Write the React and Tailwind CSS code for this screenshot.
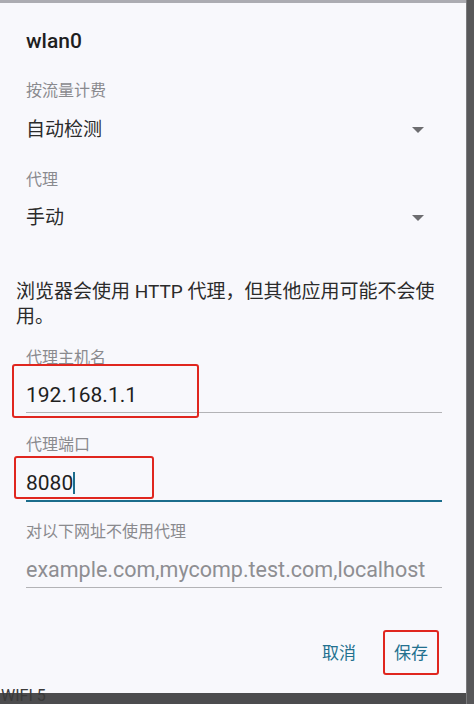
import React from "react";

const Label = ({ children, className = "" }) => (
  <div className={`text-[16px] leading-[22px] text-[#8a8a8e] ${className}`}>{children}</div>
);

const Select = ({ value, className = "" }) => (
  <div className={`flex items-center justify-between pr-[18px] ${className}`}>
    <span className="text-[19px] leading-[26px] text-[#2b2b2b]">{value}</span>
    <span className="w-0 h-0 border-l-[6px] border-r-[6px] border-t-[6px] border-l-transparent border-r-transparent border-t-[#6d6d70]" />
  </div>
);

const Field = ({ children, focused, className = "" }) => (
  <div
    className={`pb-[3px] leading-[28px] ${
      focused ? "border-b-2 border-[#1c6d8c]" : "border-b-[1.5px] border-[#b3b3b6]"
    } ${className}`}
  >
    {children}
  </div>
);

export default function App() {
  return (
    <div className="relative w-[474px] h-[704px] overflow-hidden bg-[#4c4c4e] flex font-[Roboto,'Noto_Sans_CJK_SC',sans-serif]">
      <div className="w-[466px] flex flex-col">
        <div className="h-[3px] bg-[#acacb2]" />
        <div className="h-[690px] bg-[#f8f8fc] pt-[24px] pl-[26px] pr-[24px]">
          <div className="text-[21px] leading-[28px] font-medium text-[#1f1f1f]">wlan0</div>

          <Label className="mt-[25px]">按流量计费</Label>
          <Select value="自动检测" className="mt-[15px]" />

          <Label className="mt-[26px]">代理</Label>
          <Select value="手动" className="mt-[14px]" />

          <p className="mt-[48px] -ml-[10px] text-[19px] leading-[25px] text-[#2b2b2b]">
            浏览器会使用 HTTP 代理，但其他应用可能不会使用。
          </p>

          <Label className="mt-[18px]">代理主机名</Label>
          <Field className="mt-[12px] text-[21px] text-[#1f1f1f]">192.168.1.1</Field>

          <Label className="mt-[21px]">代理端口</Label>
          <Field focused className="mt-[13px] text-[21px] text-[#1f1f1f] flex items-center">
            <span>8080</span>
            <span className="inline-block w-[2px] h-[22px] bg-[#1c6d8c]" />
          </Field>

          <Label className="mt-[19px]">对以下网址不使用代理</Label>
          <Field className="mt-[13px] text-[21.5px] text-[#8e8e92]">example.com,mycomp.test.com,localhost</Field>

          <div className="mt-[42px] flex items-center justify-end pr-[3px]">
            <span className="mr-[27px] text-[17px] leading-[24px] text-[#23708f]">取消</span>
            <span className="w-[56px] h-[45px] flex items-center justify-center border-2 border-[#e0261f] rounded-[3px] text-[17px] leading-[24px] text-[#23708f]">
              保存
            </span>
          </div>
        </div>
      </div>
      <div className="w-[8px] border-l border-[#7a7a7c] bg-[#58585a]" />

      {/* annotation boxes */}
      <div className="absolute left-[12px] top-[364px] w-[187px] h-[54px] border-2 border-[#e0261f] rounded-[3px]" />
      <div className="absolute left-[14px] top-[456px] w-[140px] h-[43px] border-2 border-[#e0261f] rounded-[3px]" />

      <span className="absolute left-[1px] top-[688px] text-[16px] leading-[16px] text-[#3a3a3a]">
        WIFI 5
      </span>
    </div>
  );
}
